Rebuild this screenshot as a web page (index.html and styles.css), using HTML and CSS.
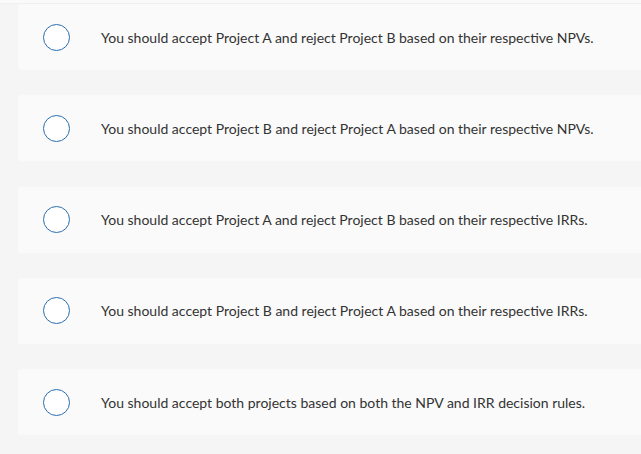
FILE: index.html
```html
<!DOCTYPE html>
<html>
<head>
<meta charset="utf-8">
<link rel="stylesheet" href="styles.css">
</head>
<body>
<div class="top-strip"></div>
<ul class="choices">
  <li class="choice"><span class="radio"></span><span class="label">You should accept Project A and reject Project B based on their respective NPVs.</span></li>
  <li class="choice"><span class="radio"></span><span class="label">You should accept Project B and reject Project A based on their respective NPVs.</span></li>
  <li class="choice"><span class="radio"></span><span class="label">You should accept Project A and reject Project B based on their respective IRRs.</span></li>
  <li class="choice"><span class="radio"></span><span class="label">You should accept Project B and reject Project A based on their respective IRRs.</span></li>
  <li class="choice"><span class="radio"></span><span class="label">You should accept both projects based on both the NPV and IRR decision rules.</span></li>
</ul>
</body>
</html>
```
FILE: styles.css
```css
html, body {
  margin: 0;
  padding: 0;
  background: #f5f5f5;
}
body {
  font-family: "Lato", "Liberation Sans", sans-serif;
  color: #333;
}
.top-strip {
  height: 3px;
  background: #fafafa;
  border-bottom: 1px solid #f0f0f0;
}
.choices {
  list-style: none;
  margin: 0;
  padding: 0 0 0 18px;
  display: flex;
  flex-direction: column;
  gap: 25.25px;
}
.choice {
  height: 66px;
  background: #fafafa;
  border-radius: 3px 0 0 3px;
  display: flex;
  align-items: center;
  padding-left: 25px;
}
.radio {
  width: 25px;
  height: 25px;
  border: 1.5px solid #2a6ead;
  border-radius: 50%;
  background: #fff;
  flex: none;
}
.label {
  margin-left: 31px;
  font-size: 14px;
  letter-spacing: 0;
}
```
